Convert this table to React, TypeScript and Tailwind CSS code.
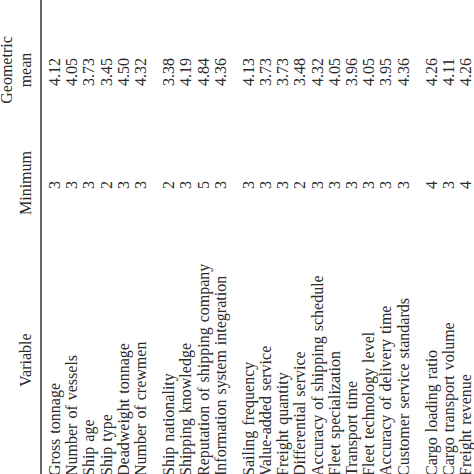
const groups: [string, string, string][][] = [
  [
    ['Gross tonnage', '3', '4.12'],
    ['Number of vessels', '3', '4.05'],
    ['Ship age', '3', '3.73'],
    ['Ship type', '2', '3.45'],
    ['Deadweight tonnage', '3', '4.50'],
    ['Number of crewmen', '3', '4.32'],
  ],
  [
    ['Ship nationality', '2', '3.38'],
    ['Shipping knowledge', '3', '4.19'],
    ['Reputation of shipping company', '5', '4.84'],
    ['Information system integration', '3', '4.36'],
  ],
  [
    ['Sailing frequency', '3', '4.13'],
    ['Value-added service', '3', '3.73'],
    ['Freight quantity', '3', '3.73'],
    ['Differential service', '2', '3.48'],
    ['Accuracy of shipping schedule', '3', '4.32'],
    ['Fleet specialization', '3', '4.05'],
    ['Transport time', '3', '3.96'],
    ['Fleet technology level', '3', '4.05'],
    ['Accuracy of delivery time', '3', '3.95'],
    ['Customer service standards', '3', '4.36'],
  ],
  [
    ['Cargo loading ratio', '4', '4.26'],
    ['Cargo transport volume', '3', '4.11'],
    ['Freight revenue', '4', '4.26'],
  ],
]

export default function App() {
  return (
    <div className="w-[474px] h-[474px] overflow-hidden bg-white">
      {/* table is typeset sideways, so the whole sheet is turned a quarter left */}
      <div
        className="w-[474px] h-[474px] -rotate-90 text-[16px] text-[#2a2a2a] flex flex-col"
        style={{ fontFamily: '"Liberation Serif", "Times New Roman", serif' }}
      >
        {/* Header */}
        <div className="flex items-end shrink-0 h-[42px] border-b-2 border-[#666] pb-[5px] leading-[19px]">
          <div className="w-[228px] text-center">Variable</div>
          <div className="w-[126px] text-center">Minimum</div>
          <div className="w-[100px] text-center">
            Geometric
            <br />
            mean
          </div>
        </div>

        {/* Body */}
        <div className="flex flex-col gap-[11px] pt-[4px]">
          {groups.map((rows, g) => (
            <div key={g} className="flex flex-col">
              {rows.map(([name, min, mean]) => (
                <div key={name} className="flex h-[17.2px] leading-[17.2px] whitespace-nowrap">
                  <div className="w-[228px] -ml-[2px] [word-spacing:1px]">{name}</div>
                  <div className="w-[126px] text-center">{min}</div>
                  <div className="w-[100px] text-center">{mean}</div>
                </div>
              ))}
            </div>
          ))}
        </div>
      </div>
    </div>
  )
}
